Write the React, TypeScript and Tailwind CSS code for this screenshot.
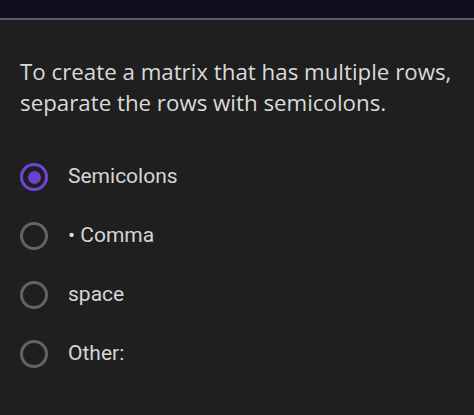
import React from "react";

const OPTIONS = [
  { label: "Semicolons", checked: true },
  { label: "• Comma", checked: false },
  { label: "space", checked: false },
  { label: "Other:", checked: false },
];

function Radio({ checked }: { checked: boolean }) {
  if (checked) {
    return (
      <span className="flex h-[28px] w-[28px] items-center justify-center rounded-full border-[3px] border-[#6f45d6]">
        <span className="h-[13px] w-[13px] rounded-full bg-[#6a3fd4]" />
      </span>
    );
  }
  return <span className="h-[28px] w-[28px] rounded-full border-[3px] border-[#636363]" />;
}

export default function App() {
  return (
    <div className="h-[415px] w-[474px] overflow-hidden bg-[#1f1f1f]" style={{ fontFamily: "Roboto, sans-serif" }}>
      <div className="h-[18px] bg-[#110e1d]" />
      <div className="h-[2px] bg-[#5d5d63]" />

      <div className="pl-5 pr-3 pt-[36px]">
        <p
          className="text-[22.3px] leading-[31px] text-[#dadada]"
          style={{ fontFamily: "'Open Sans', Roboto, sans-serif" }}
        >
          To create a matrix that has multiple rows, separate the rows with semicolons.
        </p>

        <ul className="mt-[45px] flex flex-col gap-[31px]">
          {OPTIONS.map((o) => (
            <li key={o.label} className="flex h-[28px] items-center">
              <Radio checked={o.checked} />
              <span className="ml-[20px] text-[21px] text-[#d6d6d6]">{o.label}</span>
            </li>
          ))}
        </ul>
      </div>
    </div>
  );
}
